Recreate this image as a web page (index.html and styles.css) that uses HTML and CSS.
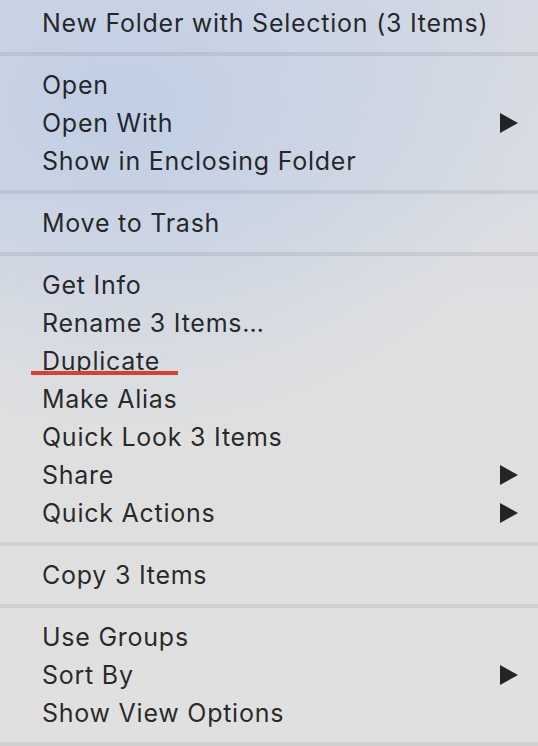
FILE: index.html
```html
<!DOCTYPE html>
<html lang="en">
<head>
    <meta charset="UTF-8" />
    <meta name="viewport" content="width=device-width, initial-scale=1.0" />
    <title>Finder context menu</title>
    <link rel="stylesheet" href="styles.css">
</head>
<body>
    <div class="menu">
        <div class="group first">
            <div class="item">New Folder with Selection (3 Items)</div>
        </div>
        <div class="sep"></div>
        <div class="group">
            <div class="item">Open</div>
            <div class="item">Open With <svg class="arrow" viewBox="0 0 18 20"><polygon points="0,0 18,10 0,20" /></svg></div>
            <div class="item">Show in Enclosing Folder</div>
        </div>
        <div class="sep"></div>
        <div class="group">
            <div class="item">Move to Trash</div>
        </div>
        <div class="sep"></div>
        <div class="group">
            <div class="item">Get Info</div>
            <div class="item">Rename 3 Items…</div>
            <div class="item">Duplicate <span class="mark"></span></div>
            <div class="item">Make Alias</div>
            <div class="item">Quick Look 3 Items</div>
            <div class="item">Share <svg class="arrow" viewBox="0 0 18 20"><polygon points="0,0 18,10 0,20" /></svg></div>
            <div class="item">Quick Actions <svg class="arrow" viewBox="0 0 18 20"><polygon points="0,0 18,10 0,20" /></svg></div>
        </div>
        <div class="sep"></div>
        <div class="group">
            <div class="item">Copy 3 Items</div>
        </div>
        <div class="sep"></div>
        <div class="group">
            <div class="item">Use Groups</div>
            <div class="item">Sort By <svg class="arrow" viewBox="0 0 18 20"><polygon points="0,0 18,10 0,20" /></svg></div>
            <div class="item">Show View Options</div>
        </div>
        <div class="sep"></div>
    </div>
</body>
</html>
```

FILE: styles.css
```css
:root {
    --texto: rgba(0, 0, 0, 0.84);
    --linea: rgba(0, 0, 0, 0.07);
    --rojo: #d8412b;
}

body {
    margin: 0;
    font-family: Inter, 'Noto Sans', sans-serif;
}

.menu {
    width: 538px;
    height: 746px;
    overflow: hidden;
    color: var(--texto);
    background:
        radial-gradient(ellipse 420px 320px at 120px 110px, rgba(190, 205, 228, 0.9), rgba(200, 210, 225, 0) 100%),
        linear-gradient(180deg, #d4d9e3 0px, #d8dce3 180px, #dedfe1 300px, #dfdfdf 500px, #e0e0e0 746px);
}

.group {
    padding: 10px 0;
}

    .group.first {
        padding-top: 4px;
    }

.sep {
    height: 4px;
    background: var(--linea);
}

.item {
    position: relative;
    height: 38px;
    padding: 0 20px 0 42px;
    display: flex;
    align-items: center;
    justify-content: space-between;
    font-size: 25px;
    letter-spacing: 0.75px;
}

.arrow {
    width: 18px;
    height: 20px;
    fill: currentColor;
}

.mark {
    position: absolute;
    left: 31px;
    top: 29px;
    width: 147px;
    height: 4px;
    background: var(--rojo);
}
```
